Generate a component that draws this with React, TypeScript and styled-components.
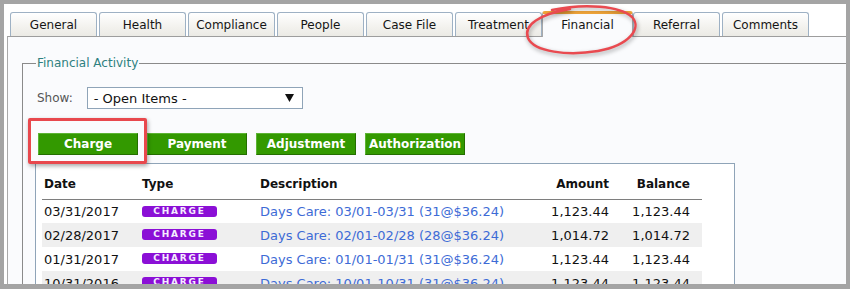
import React from "react";
import styled, { createGlobalStyle } from "styled-components";

const Global = createGlobalStyle`
  html, body { margin: 0; padding: 0; overflow: hidden; background: #fff; }
  * { box-sizing: border-box; }
`;

const FONT = `"DejaVu Sans", Verdana, sans-serif`;

const Frame = styled.div`
  position: relative;
  width: 850px;
  height: 289px;
  border: 4px solid #a4a4a4;
  border-bottom-width: 5px;
  background: #ffffff;
  overflow: hidden;
  font-family: ${FONT};
`;

const Inner = styled.div`
  padding: 8px 0 0 3px;
  display: flex;
  flex-direction: column;
  height: 100%;
`;

const TabBar = styled.div`
  display: flex;
  align-items: flex-end;
  gap: 2px;
  height: 24px;
  padding-left: 3px;
  position: relative;
  z-index: 2;
`;

const Tab = styled.div<{ $active?: boolean }>`
  flex: none;
  width: ${(p) => (p.$active ? "91px" : "87px")};
  height: ${(p) => (p.$active ? "26px" : "24px")};
  margin: ${(p) => (p.$active ? "-1px -2px -1px -2px" : "0")};
  border: 1px solid ${(p) => (p.$active ? "#a9a9a9" : "#9eb1c4")};
  border-bottom: none;
  border-top: ${(p) => (p.$active ? "3px solid #f0a53a" : "1px solid #9eb1c4")};
  border-radius: 3px 3px 0 0;
  background: ${(p) =>
    p.$active ? "#fafbfd" : "linear-gradient(#ffffff, #f3f2ee 60%, #ebeae5)"};
  display: flex;
  align-items: center;
  justify-content: center;
  font-size: 12px;
  color: #151515;
  padding-bottom: ${(p) => (p.$active ? "1px" : "0")};
`;

const Panel = styled.div`
  flex: 1;
  width: 900px;
  border-top: 1px solid #9d9d9d;
  border-left: 1px solid #a9a9a9;
  background: #fafbfd;
  padding: 20px 0 0 14px;
`;

const Fieldset = styled.fieldset`
  margin: 0;
  min-width: 0;
  border: 1px solid #8a8a8a;
  border-right: none;
  border-bottom: none;
  padding: 0 0 0 13px;
  height: 300px;
`;

const Legend = styled.legend`
  font-size: 12px;
  line-height: 13px;
  color: #2e8080;
  padding: 0 1px;
`;

const ShowRow = styled.div`
  display: flex;
  align-items: center;
  gap: 14px;
  margin: 17px 0 0 1px;
  height: 22px;
`;

const ShowLabel = styled.span`
  font-size: 12px;
  color: #555;
`;

const Select = styled.div`
  width: 216px;
  height: 22px;
  border: 1px solid #8fa4b8;
  background: #fff;
  display: flex;
  align-items: center;
  justify-content: space-between;
  padding: 0 8px 0 6px;
  font-size: 13px;
  color: #111;
`;

const Buttons = styled.div`
  display: flex;
  gap: 9px;
  margin: 24px 0 0 2px;
`;

const GreenButton = styled.div`
  width: 100px;
  height: 22px;
  background: #339900;
  border: 1px solid;
  border-color: #5cb334 #246e00 #246e00 #5cb334;
  color: #fff;
  font-size: 12px;
  font-weight: bold;
  display: flex;
  align-items: center;
  justify-content: center;
`;

const TableBox = styled.div`
  margin: 8px 0 0 -1px;
  width: 700px;
  height: 200px;
  border: 1px solid #8fa4b8;
  border-bottom: none;
  background: #fff;
  padding: 6px 0 0 6px;
`;

const Table = styled.table`
  border-collapse: collapse;
  table-layout: fixed;
  width: 660px;
`;

const Th = styled.th<{ $right?: boolean; $pr?: number }>`
  height: 29px;
  font-size: 12px;
  font-weight: bold;
  color: #111;
  text-align: ${(p) => (p.$right ? "right" : "left")};
  padding: 0 ${(p) => p.$pr ?? 2}px 0 2px;
  border-bottom: 1px solid #7e7e7e;
  vertical-align: middle;
`;

const Row = styled.tr<{ $alt?: boolean }>`
  background: ${(p) => (p.$alt ? "#efefef" : "#ffffff")};
`;

const Td = styled.td<{ $right?: boolean; $pr?: number; $link?: boolean; $top?: boolean }>`
  height: 24px;
  font-size: 13px;
  color: ${(p) => (p.$link ? "#3d6bd6" : "#111")};
  text-align: ${(p) => (p.$right ? "right" : "left")};
  padding: ${(p) => (p.$top ? "2px" : "0")} ${(p) => p.$pr ?? 2}px 0 2px;
  vertical-align: ${(p) => (p.$top ? "top" : "middle")};
  white-space: nowrap;
`;

const Badge = styled.span`
  display: inline-block;
  width: 75px;
  height: 11px;
  border-radius: 3px;
  background: #8b0fd6;
  color: #f4ecff;
  font-size: 9px;
  font-weight: bold;
  letter-spacing: 1.8px;
  line-height: 11px;
  text-align: center;
`;

const Callout = styled.div`
  position: absolute;
  left: 24px;
  top: 114px;
  width: 119px;
  height: 46px;
  border: 3px solid #e8484d;
  border-radius: 2px;
  box-shadow: 1px 2px 4px rgba(0, 0, 0, 0.35);
  pointer-events: none;
  z-index: 5;
`;

const Overlay = styled.svg`
  position: absolute;
  left: -4px;
  top: -4px;
  width: 850px;
  height: 289px;
  pointer-events: none;
  z-index: 6;
`;

const tabs = ["General", "Health", "Compliance", "People", "Case File", "Treatment", "Financial", "Referral", "Comments"];

const rows = [
  { date: "03/31/2017", desc: "Days Care: 03/01-03/31 (31@$36.24)", amt: "1,123.44", bal: "1,123.44" },
  { date: "02/28/2017", desc: "Days Care: 02/01-02/28 (28@$36.24)", amt: "1,014.72", bal: "1,014.72" },
  { date: "01/31/2017", desc: "Days Care: 01/01-01/31 (31@$36.24)", amt: "1,123.44", bal: "1,123.44" },
  { date: "10/31/2016", desc: "Days Care: 10/01-10/31 (31@$36.24)", amt: "1,123.44", bal: "1,123.44" },
];

export default function App() {
  return (
    <>
      <Global />
      <Frame>
        <Inner>
          <TabBar>
            {tabs.map((t) => (
              <Tab key={t} $active={t === "Financial"}>
                {t}
              </Tab>
            ))}
          </TabBar>
          <Panel>
            <Fieldset>
              <Legend>Financial Activity</Legend>
              <ShowRow>
                <ShowLabel>Show:</ShowLabel>
                <Select>
                  <span>- Open Items -</span>
                  <svg width="9" height="8" viewBox="0 0 9 8">
                    <polygon points="0,0 9,0 4.5,8" fill="#111" />
                  </svg>
                </Select>
              </ShowRow>
              <Buttons>
                <GreenButton>Charge</GreenButton>
                <GreenButton>Payment</GreenButton>
                <GreenButton>Adjustment</GreenButton>
                <GreenButton>Authorization</GreenButton>
              </Buttons>
              <TableBox>
                <Table>
                  <colgroup>
                    <col style={{ width: 98 }} />
                    <col style={{ width: 118 }} />
                    <col style={{ width: 290 }} />
                    <col style={{ width: 64 }} />
                    <col style={{ width: 90 }} />
                  </colgroup>
                  <thead>
                    <tr>
                      <Th>Date</Th>
                      <Th>Type</Th>
                      <Th>Description</Th>
                      <Th $right $pr={3}>Amount</Th>
                      <Th $right $pr={12}>Balance</Th>
                    </tr>
                  </thead>
                  <tbody>
                    {rows.map((r, i) => (
                      <Row key={i} $alt={i % 2 === 1}>
                        <Td>{r.date}</Td>
                        <Td $top>
                          <Badge>CHARGE</Badge>
                        </Td>
                        <Td $link>{r.desc}</Td>
                        <Td $right $pr={3}>{r.amt}</Td>
                        <Td $right $pr={12}>{r.bal}</Td>
                      </Row>
                    ))}
                  </tbody>
                </Table>
              </TableBox>
            </Fieldset>
          </Panel>
        </Inner>
        <Callout />
        <Overlay viewBox="0 0 850 289">
          <path
            d="M 552 10 C 585 3, 620 6, 632 17 C 642 28, 630 45, 598 51 C 568 56, 534 52, 528 38 C 523 25, 540 14, 570 9"
            fill="none"
            stroke="#e94a50"
            strokeWidth="2.5"
            strokeLinecap="round"
            style={{ filter: "drop-shadow(1px 2px 2px rgba(0,0,0,0.35))" }}
          />
        </Overlay>
      </Frame>
    </>
  );
}
